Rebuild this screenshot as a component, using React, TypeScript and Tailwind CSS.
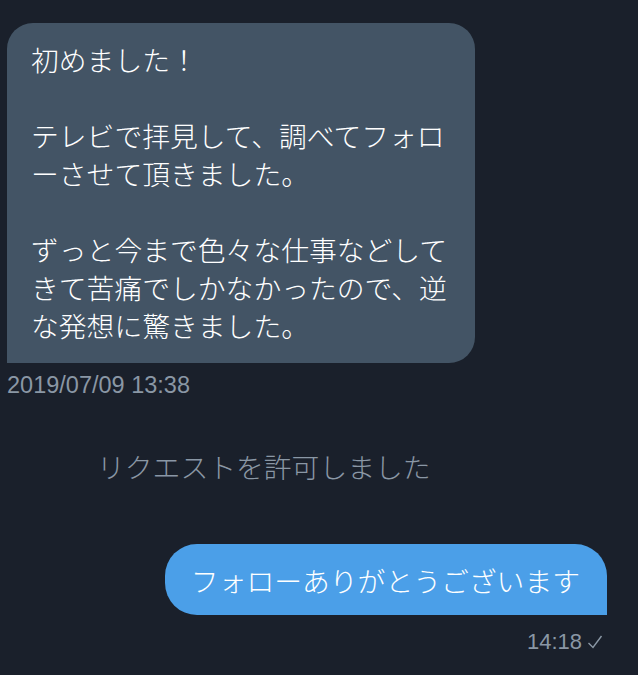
import React from "react";

const jp = { fontFamily: '"Noto Sans CJK JP", "Noto Sans", sans-serif' };
const num = { fontFamily: '"Liberation Sans", "Noto Sans CJK JP", sans-serif' };

export default function App() {
  return (
    <div className="w-[638px] h-[675px] bg-[#1a202b] overflow-hidden flex flex-col" style={jp}>
      <div className="pt-[23px] pl-[7px]">
        <div className="w-[468px] bg-[#435465] rounded-[26px] rounded-bl-none pl-[24px] pr-[16px] pt-[17px] pb-[19px] text-white text-[27.8px] leading-[38px] font-light">
          <p>初めました！</p>
          <p>&nbsp;</p>
          <p>テレビで拝見して、調べてフォロ</p>
          <p>ーさせて頂きました。</p>
          <p>&nbsp;</p>
          <p>ずっと今まで色々な仕事などして</p>
          <p>きて苦痛でしかなかったので、逆</p>
          <p>な発想に驚きました。</p>
        </div>
        <div className="mt-[9px] text-[23.5px] leading-[26px] text-[#8a97a5]" style={num}>2019/07/09 13:38</div>
      </div>
      <div className="mt-[50px] pl-[97px] text-[27.8px] leading-[36px] text-[#8a97a5] font-light">リクエストを許可しました</div>
      <div className="mt-[60px] flex flex-col items-end pr-[31px]">
        <div className="h-[71px] bg-[#4b9fe8] rounded-[32px] rounded-br-none pl-[26px] pr-[27px] flex items-center text-white text-[27.8px] leading-[38px] font-light">
          フォローありがとうございます
        </div>
        <div className="mt-[14px] flex items-center gap-[5px] text-[22px] leading-[26px] text-[#8a97a5] pr-[4px]" style={num}>
          <span>14:18</span>
          <svg width="16" height="16" viewBox="0 0 16 16" fill="none" stroke="#8a97a5" strokeWidth="1.4">
            <path d="M1.5 9 L6 13.5 L14.5 2" />
          </svg>
        </div>
      </div>
    </div>
  );
}
